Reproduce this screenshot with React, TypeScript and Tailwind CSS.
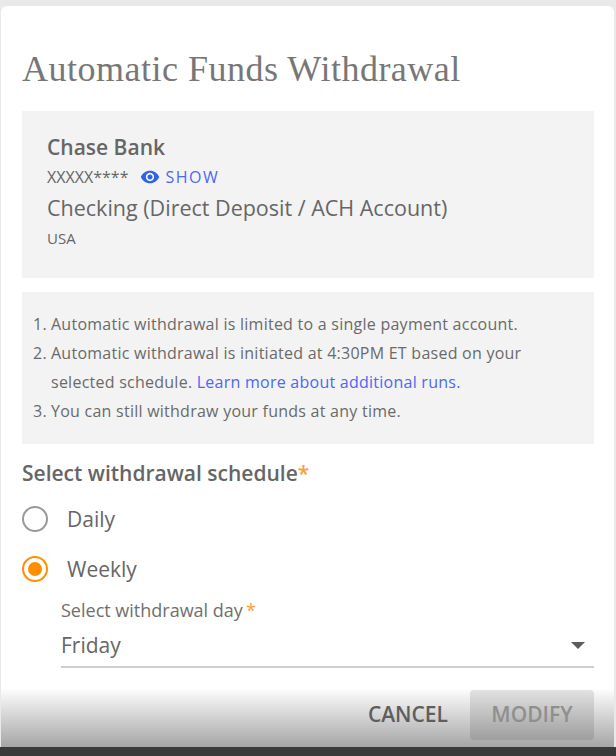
const body = "font-['Open_Sans',sans-serif]";

function Radio({ checked, label }: { checked?: boolean; label: string }) {
  return (
    <div className="flex items-center h-[26px]">
      <span
        className={`w-[26px] h-[26px] rounded-full border-[2px] flex items-center justify-center ${
          checked ? "border-[#ff8f00]" : "border-[#9a9a9a]"
        }`}
      >
        {checked && <span className="w-[14px] h-[14px] rounded-full bg-[#ff8f00]" />}
      </span>
      <span className="ml-[19px] text-[21px] leading-[26px] text-[#666]">{label}</span>
    </div>
  );
}

export default function App() {
  return (
    <div className={`${body} w-[616px] h-[756px] bg-[#e9e9e9] pt-[6px] overflow-hidden flex flex-col`}>
      <div className="ml-[1px] w-[613px] h-[741px] bg-white rounded-t-[6px] flex flex-col shrink-0">
        <div className="pl-[21px] pr-[20px] flex-1">
          <h1 className="mt-[41px] h-[44px] font-['Liberation_Serif',serif] text-[36px] leading-[44px] tracking-[0.5px] text-[#777] font-normal">
            Automatic Funds Withdrawal
          </h1>

          <div className="mt-[20px] h-[167px] bg-[#f3f3f3] pl-[25px] pt-[20px] text-[#666]">
            <div className="text-[21px] leading-[33px] font-semibold">Chase Bank</div>
            <div className="flex items-center h-[25px] text-[16px]">
              <span>XXXXX****</span>
              <svg viewBox="0 0 24 24" className="w-[20px] h-[20px] ml-[12px] fill-[#2f62e8]">
                <path d="M12 4.5C7 4.5 2.73 7.61 1 12c1.73 4.39 6 7.5 11 7.5s9.27-3.11 11-7.5c-1.73-4.39-6-7.5-11-7.5zM12 17c-2.76 0-5-2.24-5-5s2.24-5 5-5 5 2.24 5 5-2.24 5-5 5zm0-8c-1.66 0-3 1.34-3 3s1.34 3 3 3 3-1.34 3-3-1.34-3-3-3z" />
              </svg>
              <span className="ml-[5px] text-[16px] tracking-[1.5px] text-[#4c68f5]">SHOW</span>
            </div>
            <div className="text-[21.5px] leading-[38px]">Checking (Direct Deposit / ACH Account)</div>
            <div className="text-[15px] leading-[24px] mt-[-1px]">USA</div>
          </div>

          <ol className="mt-[14px] h-[152px] bg-[#f3f3f3] pl-[11px] pt-[18px] text-[16px] leading-[29px] text-[#6a6a6a] tracking-[0.25px]">
            <li className="flex">
              <span className="w-[18px] shrink-0">1.</span>
              <span>Automatic withdrawal is limited to a single payment account.</span>
            </li>
            <li className="flex">
              <span className="w-[18px] shrink-0">2.</span>
              <span className="w-[480px]">
                Automatic withdrawal is initiated at 4:30PM ET based on your selected schedule.{" "}
                <span className="text-[#4c68f5]">Learn more about additional runs.</span>
              </span>
            </li>
            <li className="flex">
              <span className="w-[18px] shrink-0">3.</span>
              <span>You can still withdraw your funds at any time.</span>
            </li>
          </ol>

          <div className="mt-[14px] text-[21px] leading-[30px] font-semibold text-[#666]">
            Select withdrawal schedule<span className="text-[#ff9d3c]">*</span>
          </div>

          <div className="mt-[18px] flex flex-col gap-[24px]">
            <Radio label="Daily" />
            <Radio checked label="Weekly" />
          </div>

          <div className="ml-[39px] mt-[17px] w-[533px]">
            <div className="text-[18px] leading-[23px] text-[#6f6f6f]">
              Select withdrawal day<span className="ml-[3px] text-[#ff9d3c]">*</span>
            </div>
            <div className="mt-[4px] h-[42px] flex items-center justify-between border-b-[2px] border-[#cfcfcf] pr-[9px] pb-[2px]">
              <span className="text-[21px] leading-[30px] text-[#666]">Friday</span>
              <span className="w-0 h-0 border-x-[7px] border-x-transparent border-t-[7px] border-t-[#5c5c5c]" />
            </div>
          </div>
        </div>

        <div className="h-[59px] mt-[-1px] shrink-0 bg-gradient-to-b from-[#ffffff] to-[#a6a6a6] flex items-start justify-end pr-[20px] pt-[2px]">
          <span className="mr-[22px] h-[50px] flex items-center text-[21px] font-semibold text-[#5e5e5e]">CANCEL</span>
          <span className="w-[124px] h-[50px] rounded-[4px] bg-black/10 flex items-center justify-center text-[21px] font-semibold text-[#8f8f8f]">
            MODIFY
          </span>
        </div>
      </div>
      <div className="flex-1 bg-[#3a3a3a]" />
    </div>
  );
}
